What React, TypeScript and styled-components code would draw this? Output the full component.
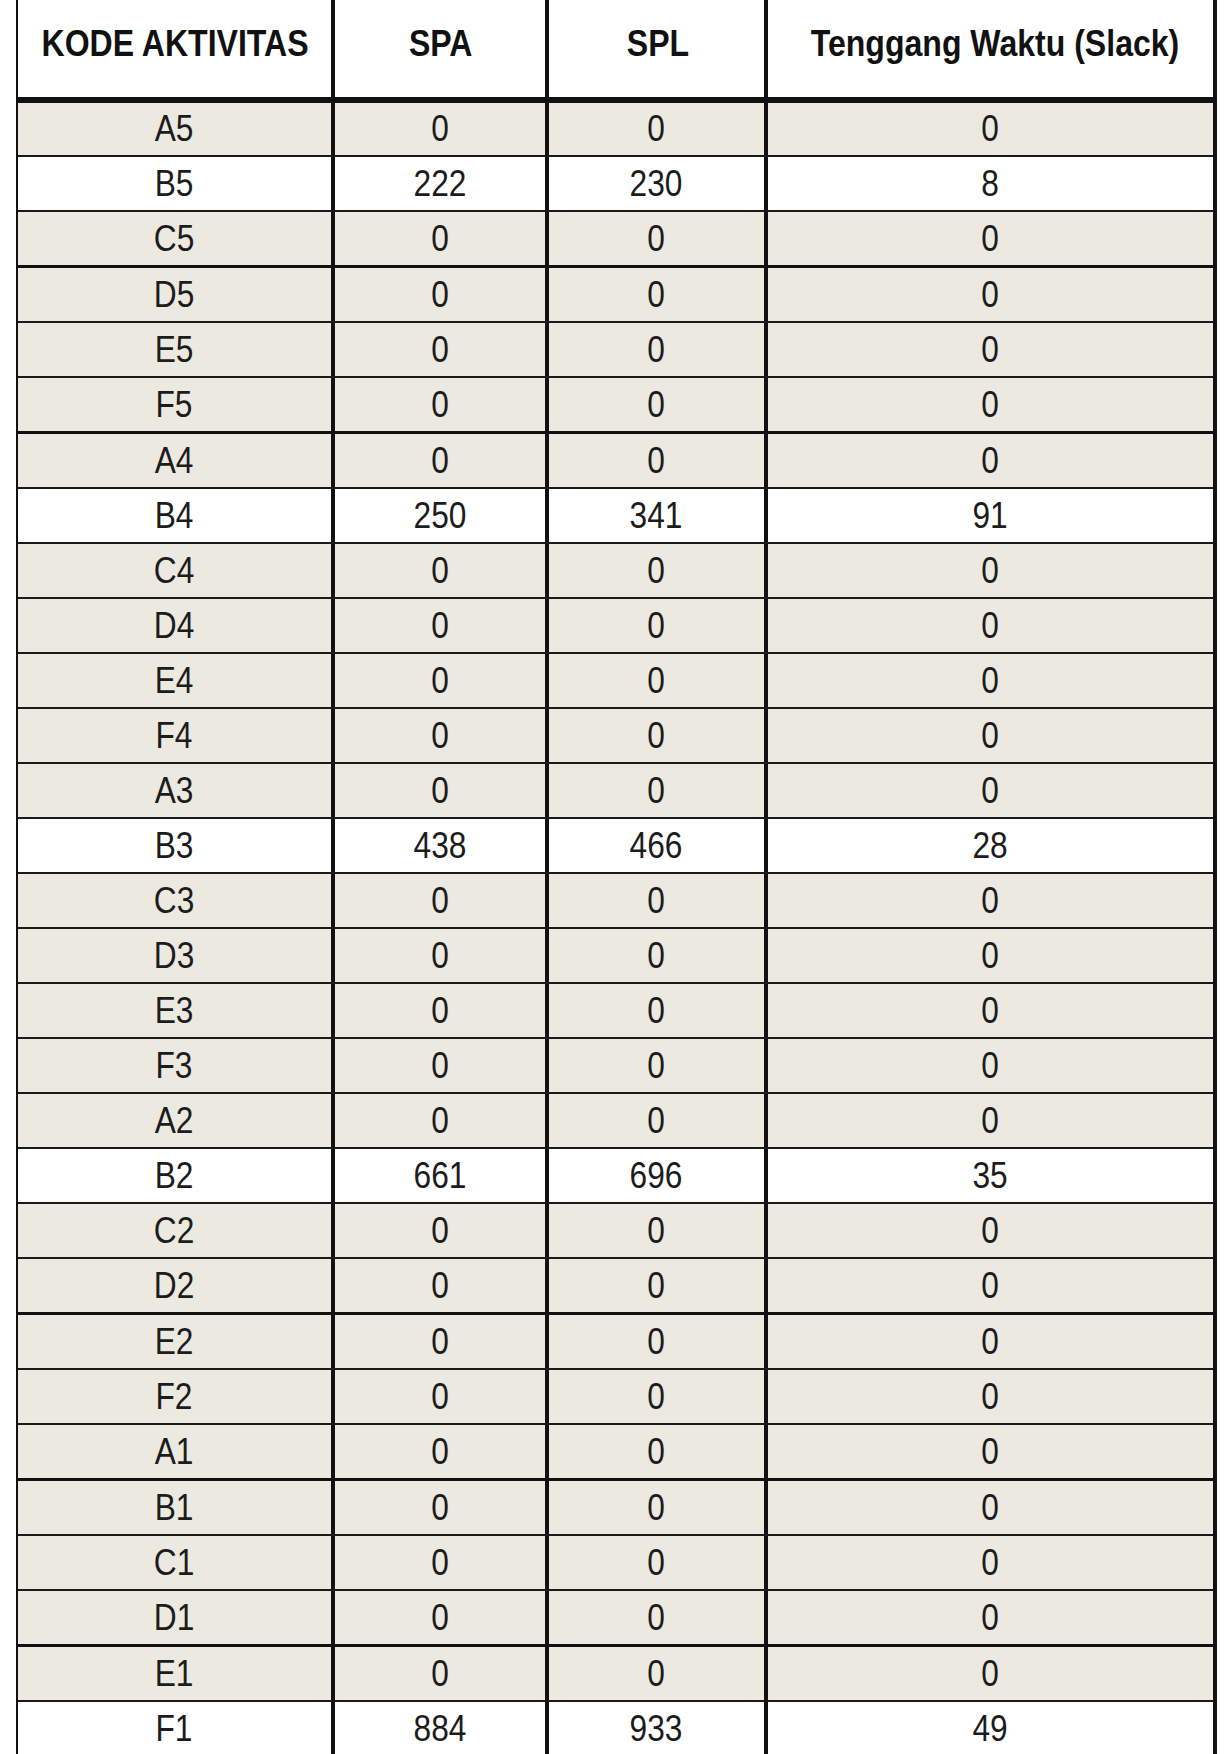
import React from 'react';
import styled, { createGlobalStyle } from 'styled-components';

const GlobalStyle = createGlobalStyle`
  html, body {
    margin: 0;
    padding: 0;
    background: #ffffff;
  }
`;

interface Activity {
  code: string;
  spa: number;
  spl: number;
  slack: number;
}

const activities: Activity[] = [
  { code: 'A5', spa: 0, spl: 0, slack: 0 },
  { code: 'B5', spa: 222, spl: 230, slack: 8 },
  { code: 'C5', spa: 0, spl: 0, slack: 0 },
  { code: 'D5', spa: 0, spl: 0, slack: 0 },
  { code: 'E5', spa: 0, spl: 0, slack: 0 },
  { code: 'F5', spa: 0, spl: 0, slack: 0 },
  { code: 'A4', spa: 0, spl: 0, slack: 0 },
  { code: 'B4', spa: 250, spl: 341, slack: 91 },
  { code: 'C4', spa: 0, spl: 0, slack: 0 },
  { code: 'D4', spa: 0, spl: 0, slack: 0 },
  { code: 'E4', spa: 0, spl: 0, slack: 0 },
  { code: 'F4', spa: 0, spl: 0, slack: 0 },
  { code: 'A3', spa: 0, spl: 0, slack: 0 },
  { code: 'B3', spa: 438, spl: 466, slack: 28 },
  { code: 'C3', spa: 0, spl: 0, slack: 0 },
  { code: 'D3', spa: 0, spl: 0, slack: 0 },
  { code: 'E3', spa: 0, spl: 0, slack: 0 },
  { code: 'F3', spa: 0, spl: 0, slack: 0 },
  { code: 'A2', spa: 0, spl: 0, slack: 0 },
  { code: 'B2', spa: 661, spl: 696, slack: 35 },
  { code: 'C2', spa: 0, spl: 0, slack: 0 },
  { code: 'D2', spa: 0, spl: 0, slack: 0 },
  { code: 'E2', spa: 0, spl: 0, slack: 0 },
  { code: 'F2', spa: 0, spl: 0, slack: 0 },
  { code: 'A1', spa: 0, spl: 0, slack: 0 },
  { code: 'B1', spa: 0, spl: 0, slack: 0 },
  { code: 'C1', spa: 0, spl: 0, slack: 0 },
  { code: 'D1', spa: 0, spl: 0, slack: 0 },
  { code: 'E1', spa: 0, spl: 0, slack: 0 },
  { code: 'F1', spa: 884, spl: 933, slack: 49 },
];

// rows whose top rule came out heavier in the scan
const heavyRows = ['D5', 'A4', 'E2', 'B1', 'E1'];

const COLUMNS = '317px 214px 219px 445px';

const Page = styled.div`
  padding-left: 16px;
  font-family: 'Liberation Sans', Arial, sans-serif;
  color: #1c1c1c;
`;

const Table = styled.div`
  width: 1195px;
  border-left: 2px solid #111;
  border-right: 4px solid #111;
`;

const HeaderRow = styled.div`
  display: grid;
  grid-template-columns: ${COLUMNS};
  height: 97px;
  border-bottom: 6px solid #111;
  background: #ffffff;
`;

const HeadCell = styled.div<{ $shift?: number; $last?: boolean }>`
  display: flex;
  justify-content: center;
  align-items: flex-start;
  padding-top: 26px;
  padding-left: ${(p) => p.$shift ?? 0}px;
  border-right: ${(p) => (p.$last ? 'none' : '4px solid #111')};
  font-weight: bold;
  font-size: 36px;
  line-height: 36px;
  color: #111;
  white-space: nowrap;
`;

const Row = styled.div<{ $plain: boolean; $first: boolean; $heavy: boolean }>`
  display: grid;
  grid-template-columns: ${COLUMNS};
  height: ${(p) => (p.$first ? 52 : 53)}px;
  border-top: ${(p) => (p.$first ? 'none' : p.$heavy ? '3px solid #111' : '2px solid #1a1a1a')};
  background: ${(p) => (p.$plain ? '#ffffff' : '#ece9e0')};
`;

const Cell = styled.div<{ $last?: boolean }>`
  display: flex;
  justify-content: center;
  align-items: center;
  border-right: ${(p) => (p.$last ? 'none' : '4px solid #111')};
  font-size: 36px;
  line-height: 36px;
`;

const Squeezed = styled.span<{ $head?: boolean }>`
  display: inline-block;
  transform: scaleX(${(p) => (p.$head ? 0.89 : 0.88)});
`;

const App: React.FC = () => {
  return (
    <Page>
      <GlobalStyle />
      <Table>
        <HeaderRow>
          <HeadCell $shift={2}>
            <Squeezed $head>KODE AKTIVITAS</Squeezed>
          </HeadCell>
          <HeadCell $shift={2}>
            <Squeezed $head>SPA</Squeezed>
          </HeadCell>
          <HeadCell $shift={3}>
            <Squeezed $head>SPL</Squeezed>
          </HeadCell>
          <HeadCell $shift={10} $last>
            <Squeezed $head>Tenggang Waktu (Slack)</Squeezed>
          </HeadCell>
        </HeaderRow>
        {activities.map((a, i) => (
          <Row
            key={a.code}
            $first={i === 0}
            $heavy={heavyRows.includes(a.code)}
            $plain={a.slack > 0}
          >
            <Cell>
              <Squeezed>{a.code}</Squeezed>
            </Cell>
            <Cell>
              <Squeezed>{a.spa}</Squeezed>
            </Cell>
            <Cell>
              <Squeezed>{a.spl}</Squeezed>
            </Cell>
            <Cell $last>
              <Squeezed>{a.slack}</Squeezed>
            </Cell>
          </Row>
        ))}
      </Table>
    </Page>
  );
};

export default App;
